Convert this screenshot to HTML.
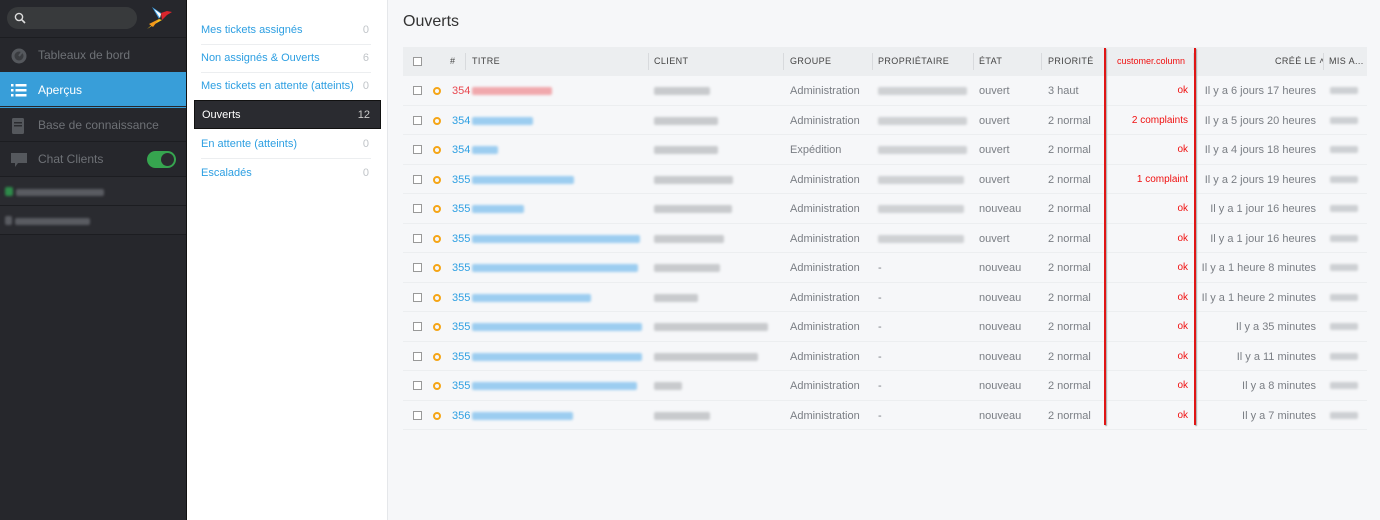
<!DOCTYPE html>
<html><head><meta charset="utf-8"><style>
*{margin:0;padding:0;box-sizing:border-box}
body{width:1380px;height:520px;overflow:hidden;background:#f6f7f9;font-family:"Liberation Sans",sans-serif;position:relative}
.sb{position:absolute;left:0;top:0;width:186px;height:520px;background:#26272c}
.srch{position:absolute;left:7px;top:7px;width:130px;height:22px;border-radius:11px;background:#383a3c}
.nav{position:absolute;left:0;width:186px;height:34px;border-top:1px solid #1c1d21;color:#6e7176;font-size:12px;line-height:35px;padding-left:38px}
.nav.act{background:#389ed9;color:#fff;border-color:#389ed9}
.ic{position:absolute;left:11px;top:10px}
.blur{filter:blur(1.2px);display:inline-block;height:7px;border-radius:2px}
.mid{position:absolute;left:186px;top:0;width:202px;height:520px;background:#fff;border-right:1px solid #e5e7ea;border-left:1px solid #111}
.mi{position:absolute;left:14px;width:170px;height:29px;border-bottom:1px solid #eceef0;color:#2d9fe2;font-size:11px;line-height:29px}
.mi span{position:absolute;right:2px;color:#c0c4c8}
.mi.act{left:7px;width:187px;background:#2a2b30;color:#fff;padding-left:7px;border:1px solid #111}
.mi.act span{color:#ccc;right:10px}
h1{position:absolute;left:403px;top:13px;font-size:16px;font-weight:normal;color:#333}
.th{position:absolute;left:403px;top:47px;width:964px;height:29px;background:#eceef0;font-size:9px;color:#444;letter-spacing:.4px;line-height:29px}
.th div{position:absolute;top:0}
.th .sep{top:6px;width:1px;height:17px;background:#d8dadd}
.row{position:absolute;left:403px;width:964px;height:29.5px;border-bottom:1px solid #eceef0;font-size:11px;color:#7a7e84;line-height:30px}
.row>*{position:absolute}
.cb{left:10px;top:10px;width:9px;height:9px;border:1px solid #999;background:#fff}
.th .cb{top:10px}
.ci{left:30px;top:11px;width:8px;height:8px;border:2px solid #f5a516;border-radius:50%}
.n{left:49px;color:#2d9fe2}
.t{left:69px;top:11px;height:8px;background:#9ccdf0}
.c{left:251px;top:11px;height:8px;background:#c8cacd}
.g{left:387px}
.p{left:475px}
.pb{left:475px;top:11px;height:8px;background:#cfd1d4}
.e{left:576px}.pr{left:645px}
.cu{right:179px;color:#f01010;font-size:10px}
.cr{right:51px}
.ma{left:927px;top:11px;height:7px;width:28px;background:#cdd0d3}
.red{position:absolute;top:48px;width:2px;height:377px;background:#e01515;box-shadow:1px 1px 1px #aaa}
</style></head><body>
<div class="sb">
 <div class="srch"><svg style="position:absolute;left:7px;top:5px" width="12" height="12" viewBox="0 0 12 12"><circle cx="5" cy="5" r="3.6" fill="none" stroke="#ddd" stroke-width="1.4"/><path d="M7.6 7.6L11 11" stroke="#ddd" stroke-width="1.6"/></svg></div>
 <svg style="position:absolute;left:145px;top:5px" width="30" height="26" viewBox="0 0 30 26"><path d="M7 2L16 8L14 14Z" fill="#3d9de0"/><path d="M9 4L16 9L15 13Z" fill="#fff"/><path d="M16 8L22 6L27 7L22 10L17 15Z" fill="#d9252d"/><path d="M2 24L14 14L17 15L10 19Z" fill="#f6c31f"/><path d="M4 19L14 14L8 22Z" fill="#f49a1b"/></svg>
 <div class="nav" style="top:37px"><svg class="ic" width="16" height="16" viewBox="0 0 16 16"><circle cx="8" cy="8" r="7.5" fill="#55585d"/><circle cx="8" cy="8" r="4.5" fill="#3a3c40"/><path d="M8 8L11 4" stroke="#55585d" stroke-width="2"/></svg>Tableaux de bord</div>
 <div class="nav act" style="top:72px"><svg class="ic" width="16" height="14" viewBox="0 0 16 14"><g fill="#fff"><rect x="0" y="1" width="2.5" height="2.5"/><rect x="0" y="6" width="2.5" height="2.5"/><rect x="0" y="11" width="2.5" height="2.5"/><rect x="4.5" y="1" width="11" height="2.5"/><rect x="4.5" y="6" width="11" height="2.5"/><rect x="4.5" y="11" width="11" height="2.5"/></g></svg>Aperçus</div>
 <div class="nav" style="top:107px;border-top-color:#389ed9"><svg class="ic" width="14" height="16" viewBox="0 0 14 16"><rect x="1" y="0" width="12" height="16" rx="1.5" fill="#55585d"/><rect x="3" y="4" width="8" height="1.5" fill="#2a2b2f"/><rect x="3" y="7" width="8" height="1.5" fill="#2a2b2f"/></svg>Base de connaissance</div>
 <div class="nav" style="top:141px"><svg class="ic" width="16" height="16" viewBox="0 0 16 16"><path d="M0 1H16V11H7L4 15V11H0Z" fill="#55585d"/></svg>Chat Clients
  <div style="position:absolute;left:147px;top:9px;width:29px;height:17px;border-radius:9px;background:#36a54f"><div style="position:absolute;right:2px;top:2px;width:13px;height:13px;border-radius:50%;background:#2a2b2f"></div></div></div>
 <div class="nav" style="top:176px;height:29px;background:#2a2b30;padding-left:5px"><span class="blur" style="width:8px;height:9px;background:#2e8a4a;margin-top:10px;vertical-align:top"></span> <span class="blur" style="width:88px;background:#5a5c62;vertical-align:top;margin-top:12px"></span></div>
 <div class="nav" style="top:205px;height:29px;background:#2a2b30;padding-left:5px"><span class="blur" style="width:7px;height:9px;background:#5a5c62;margin-top:10px;vertical-align:top"></span> <span class="blur" style="width:75px;background:#5a5c62;vertical-align:top;margin-top:12px"></span></div>
 <div style="position:absolute;left:0;top:234px;width:186px;border-top:1px solid #1c1d21"></div>
</div>
<div class="mid">
 <div class="mi" style="top:16px">Mes tickets assignés<span>0</span></div>
 <div class="mi" style="top:44px">Non assignés &amp; Ouverts<span>6</span></div>
 <div class="mi" style="top:72px">Mes tickets en attente (atteints)<span>0</span></div>
 <div class="mi act" style="top:100px;height:29px">Ouverts<span>12</span></div>
 <div class="mi" style="top:130px">En attente (atteints)<span>0</span></div>
 <div class="mi" style="top:159px;border:none">Escaladés<span>0</span></div>
</div>
<h1>Ouverts</h1>
<div class="th"><div class="cb"></div><div style="left:47px">#</div><div class="sep" style="left:62px"></div><div style="left:69px">TITRE</div><div class="sep" style="left:245px"></div><div style="left:251px">CLIENT</div><div class="sep" style="left:380px"></div><div style="left:387px">GROUPE</div><div class="sep" style="left:469px"></div><div style="left:475px">PROPRIÉTAIRE</div><div class="sep" style="left:570px"></div><div style="left:576px">ÉTAT</div><div class="sep" style="left:638px"></div><div style="left:645px">PRIORITÉ</div><div style="left:714px;color:#f01010;letter-spacing:0">customer.column</div><div class="sep" style="left:790px"></div><div style="left:872px">CRÉÉ LE ˄</div><div class="sep" style="left:920px"></div><div style="left:926px">MIS A...</div></div>

<div class="row" style="top:76px"><div class="cb"></div><div class="ci"></div><div class="n" style="color:#e8474f">354</div><div class="t blur" style="width:80px;background:#f0a8ad"></div><div class="c blur" style="width:56px"></div><div class="g">Administration</div><div class="pb blur" style="width:89px"></div><div class="e">ouvert</div><div class="pr">3 haut</div><div class="cu">ok</div><div class="cr">Il y a 6 jours 17 heures</div><div class="ma blur"></div></div>
<div class="row" style="top:105.5px"><div class="cb"></div><div class="ci"></div><div class="n">354</div><div class="t blur" style="width:61px"></div><div class="c blur" style="width:64px"></div><div class="g">Administration</div><div class="pb blur" style="width:89px"></div><div class="e">ouvert</div><div class="pr">2 normal</div><div class="cu">2 complaints</div><div class="cr">Il y a 5 jours 20 heures</div><div class="ma blur"></div></div>
<div class="row" style="top:135px"><div class="cb"></div><div class="ci"></div><div class="n">354</div><div class="t blur" style="width:26px"></div><div class="c blur" style="width:64px"></div><div class="g">Expédition</div><div class="pb blur" style="width:89px"></div><div class="e">ouvert</div><div class="pr">2 normal</div><div class="cu">ok</div><div class="cr">Il y a 4 jours 18 heures</div><div class="ma blur"></div></div>
<div class="row" style="top:164.5px"><div class="cb"></div><div class="ci"></div><div class="n">355</div><div class="t blur" style="width:102px"></div><div class="c blur" style="width:79px"></div><div class="g">Administration</div><div class="pb blur" style="width:86px"></div><div class="e">ouvert</div><div class="pr">2 normal</div><div class="cu">1 complaint</div><div class="cr">Il y a 2 jours 19 heures</div><div class="ma blur"></div></div>
<div class="row" style="top:194px"><div class="cb"></div><div class="ci"></div><div class="n">355</div><div class="t blur" style="width:52px"></div><div class="c blur" style="width:78px"></div><div class="g">Administration</div><div class="pb blur" style="width:86px"></div><div class="e">nouveau</div><div class="pr">2 normal</div><div class="cu">ok</div><div class="cr">Il y a 1 jour 16 heures</div><div class="ma blur"></div></div>
<div class="row" style="top:223.5px"><div class="cb"></div><div class="ci"></div><div class="n">355</div><div class="t blur" style="width:168px"></div><div class="c blur" style="width:70px"></div><div class="g">Administration</div><div class="pb blur" style="width:86px"></div><div class="e">ouvert</div><div class="pr">2 normal</div><div class="cu">ok</div><div class="cr">Il y a 1 jour 16 heures</div><div class="ma blur"></div></div>
<div class="row" style="top:253px"><div class="cb"></div><div class="ci"></div><div class="n">355</div><div class="t blur" style="width:166px"></div><div class="c blur" style="width:66px"></div><div class="g">Administration</div><div class="p">-</div><div class="e">nouveau</div><div class="pr">2 normal</div><div class="cu">ok</div><div class="cr">Il y a 1 heure 8 minutes</div><div class="ma blur"></div></div>
<div class="row" style="top:282.5px"><div class="cb"></div><div class="ci"></div><div class="n">355</div><div class="t blur" style="width:119px"></div><div class="c blur" style="width:44px"></div><div class="g">Administration</div><div class="p">-</div><div class="e">nouveau</div><div class="pr">2 normal</div><div class="cu">ok</div><div class="cr">Il y a 1 heure 2 minutes</div><div class="ma blur"></div></div>
<div class="row" style="top:312px"><div class="cb"></div><div class="ci"></div><div class="n">355</div><div class="t blur" style="width:170px"></div><div class="c blur" style="width:114px"></div><div class="g">Administration</div><div class="p">-</div><div class="e">nouveau</div><div class="pr">2 normal</div><div class="cu">ok</div><div class="cr">Il y a 35 minutes</div><div class="ma blur"></div></div>
<div class="row" style="top:341.5px"><div class="cb"></div><div class="ci"></div><div class="n">355</div><div class="t blur" style="width:170px"></div><div class="c blur" style="width:104px"></div><div class="g">Administration</div><div class="p">-</div><div class="e">nouveau</div><div class="pr">2 normal</div><div class="cu">ok</div><div class="cr">Il y a 11 minutes</div><div class="ma blur"></div></div>
<div class="row" style="top:371px"><div class="cb"></div><div class="ci"></div><div class="n">355</div><div class="t blur" style="width:165px"></div><div class="c blur" style="width:28px"></div><div class="g">Administration</div><div class="p">-</div><div class="e">nouveau</div><div class="pr">2 normal</div><div class="cu">ok</div><div class="cr">Il y a 8 minutes</div><div class="ma blur"></div></div>
<div class="row" style="top:400.5px"><div class="cb"></div><div class="ci"></div><div class="n">356</div><div class="t blur" style="width:101px"></div><div class="c blur" style="width:56px"></div><div class="g">Administration</div><div class="p">-</div><div class="e">nouveau</div><div class="pr">2 normal</div><div class="cu">ok</div><div class="cr">Il y a 7 minutes</div><div class="ma blur"></div></div>
<div class="red" style="left:1104px"></div>
<div class="red" style="left:1194px"></div>
</body></html>
